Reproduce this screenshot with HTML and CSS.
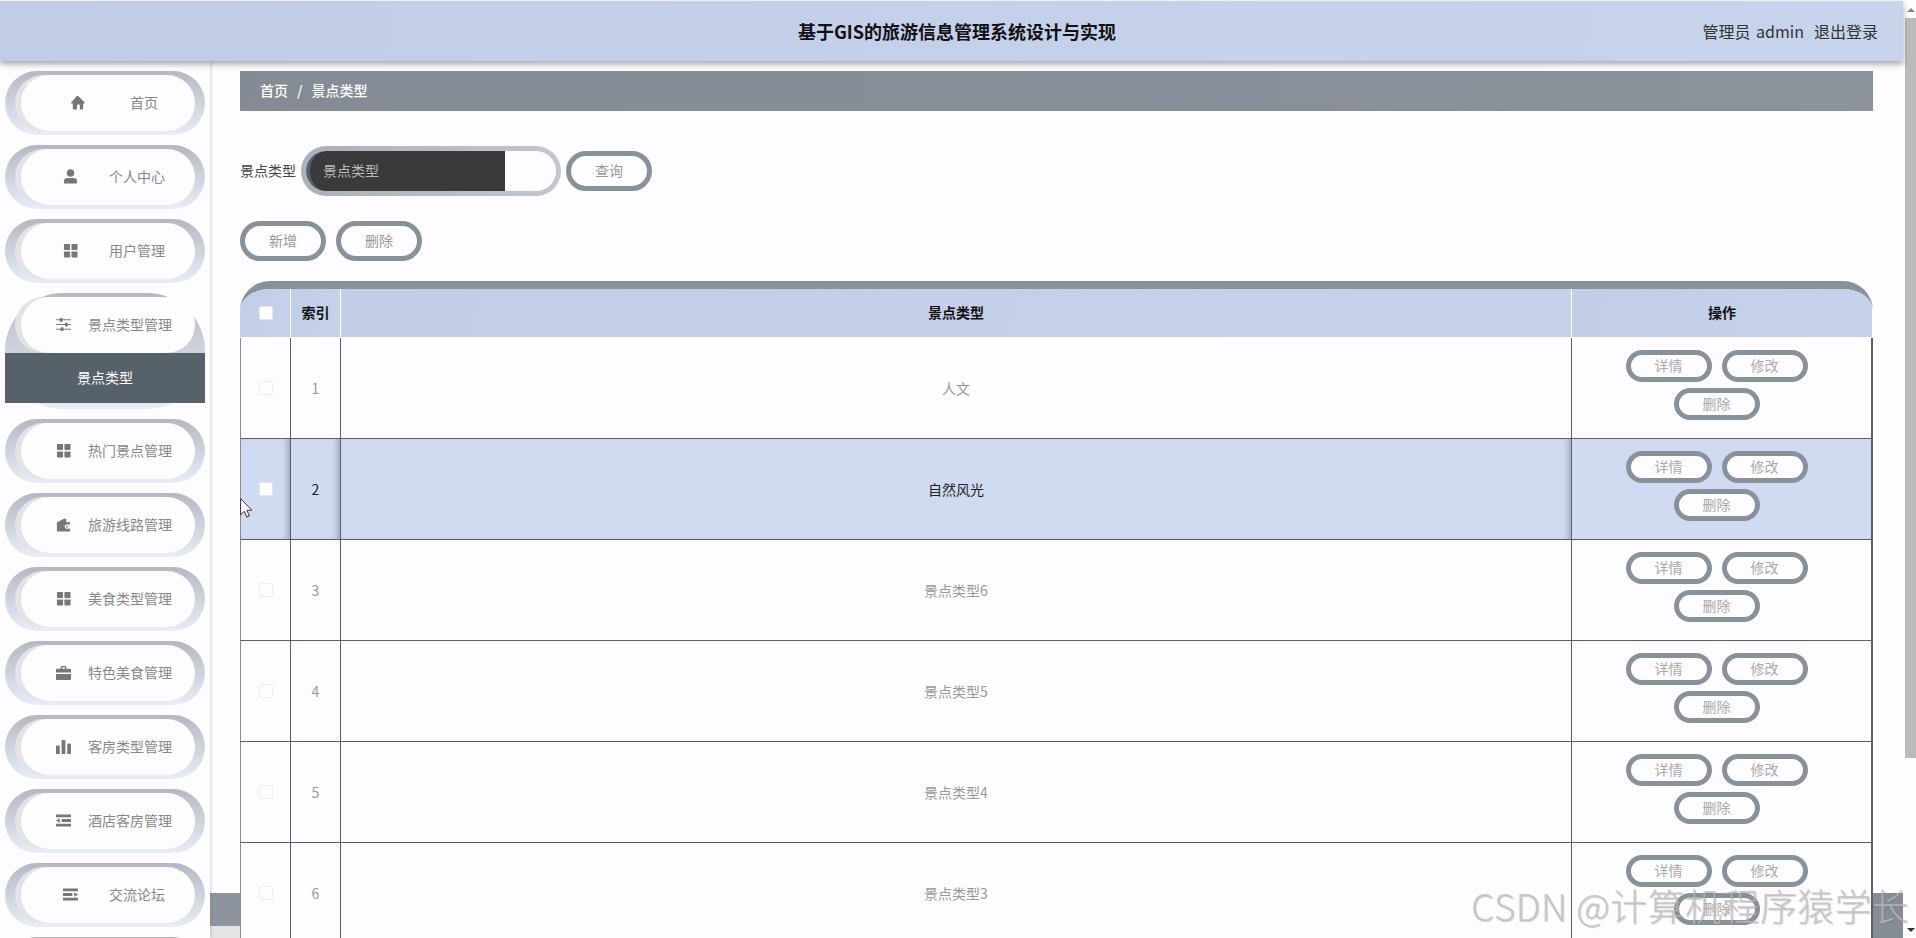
FILE: index.html
```html
<!DOCTYPE html>
<html lang="zh-CN">
<head>
    <meta charset="UTF-8">
    <meta name="viewport" content="width=device-width, initial-scale=1.0">
    <title>基于GIS的旅游信息管理系统设计与实现</title>
    <link rel="stylesheet" href="styles.css">
</head>
<body>
    <svg class="icon-defs" aria-hidden="true">
        <symbol id="i-home" viewBox="0 0 16 16"><path d="M8 1c.4 0 .7.1 1 .4l6.500 6.200c.6.6.2 1.400-.5 1.400h-1v5.500c0 .6-.4 1-1 1h-2.500v-4.500c0-.6-.4-1-1-1h-1c-.6 0-1 .4-1 1v4.500H4c-.6 0-1-.4-1-1V9H2c-.7 0-1.100-.8-.5-1.400L7 1.400c.3-.3.6-.4 1-.4z"/></symbol>
        <symbol id="i-user" viewBox="0 0 16 16"><circle cx="8" cy="4.200" r="4"/><path d="M1 15.500v-2.700C1 10.700 2.700 9.500 4.500 9.500h7c1.800 0 3.500 1.200 3.500 3.300v2.700z"/></symbol>
        <symbol id="i-grid" viewBox="0 0 16 16"><rect x="1" y="1" width="6.500" height="6.500" rx=".8"/><rect x="9" y="1" width="6.500" height="6.500" rx=".8"/><rect x="1" y="9" width="6.500" height="6.500" rx=".8"/><rect x="9" y="9" width="6.500" height="6.500" rx=".8"/></symbol>
        <symbol id="i-sliders" viewBox="0 0 16 16"><path d="M0 2.500h16v1H0zM0 7.500h16v1H0zM0 12.500h16v1H0z"/><rect x="4" y="1" width="3" height="4" rx=".6"/><rect x="9.500" y="6" width="3" height="4" rx=".6"/><rect x="5" y="11" width="3" height="4" rx=".6"/></symbol>
        <symbol id="i-wallet" viewBox="0 0 16 16"><path d="M1 5.500L9 1.500l2 .8v3.200h4V8h-3.500a2.300 2.300 0 000 4.600H15v2.900H1z"/><circle cx="11.700" cy="10.300" r="1"/></symbol>
        <symbol id="i-case" viewBox="0 0 16 16"><path d="M5 4V2c0-.6.4-1 1-1h4c.6 0 1 .4 1 1v2h4c.6 0 1 .4 1 1v3H0V5c0-.6.4-1 1-1zm1.500 0h3V2.500h-3zM0 9.500h16V15c0 .6-.4 1-1 1H1c-.6 0-1-.4-1-1z"/></symbol>
        <symbol id="i-bars" viewBox="0 0 16 16"><rect x="0" y="7" width="4" height="9"/><rect x="6" y="1" width="4" height="15" rx=".8"/><rect x="12" y="5" width="4" height="11"/></symbol>
        <symbol id="i-outdent" viewBox="0 0 16 16"><path d="M0 1.500h16v3H0zM6 6.500h10v3H6zM0 11.500h16v3H0zM0 8l4-2.300v4.600z"/></symbol>
        <symbol id="i-indent" viewBox="0 0 16 16"><path d="M0 1.500h16v3H0zM0 6.500h10v3H0zM0 11.500h16v3H0zM16 8l-4-2.300v4.600z"/></symbol>
    </svg>

    <header class="topbar">
        <span></span>
        <h1 class="topbar-title">基于GIS的旅游信息管理系统设计与实现</h1>
        <div class="topbar-user">
            <span class="user-name">管理员 admin</span>
            <a href="#">退出登录</a>
        </div>
    </header>

    <div class="layout">
        <nav class="sidebar">
            <div class="menu-item">
                <a class="menu-title gap-two" href="#"><svg class="menu-icon"><use href="#i-home"/></svg>首页</a>
            </div>
            <div class="menu-item">
                <a class="menu-title gap-four" href="#"><svg class="menu-icon"><use href="#i-user"/></svg>个人中心</a>
            </div>
            <div class="menu-item">
                <a class="menu-title gap-four" href="#"><svg class="menu-icon"><use href="#i-grid"/></svg>用户管理</a>
            </div>
            <div class="menu-item menu-open">
                <a class="menu-title" href="#"><svg class="menu-icon"><use href="#i-sliders"/></svg>景点类型管理</a>
                <a class="submenu-item" href="#">景点类型</a>
            </div>
            <div class="menu-item">
                <a class="menu-title" href="#"><svg class="menu-icon"><use href="#i-grid"/></svg>热门景点管理</a>
            </div>
            <div class="menu-item">
                <a class="menu-title" href="#"><svg class="menu-icon"><use href="#i-wallet"/></svg>旅游线路管理</a>
            </div>
            <div class="menu-item">
                <a class="menu-title" href="#"><svg class="menu-icon"><use href="#i-grid"/></svg>美食类型管理</a>
            </div>
            <div class="menu-item">
                <a class="menu-title" href="#"><svg class="menu-icon"><use href="#i-case"/></svg>特色美食管理</a>
            </div>
            <div class="menu-item">
                <a class="menu-title" href="#"><svg class="menu-icon"><use href="#i-bars"/></svg>客房类型管理</a>
            </div>
            <div class="menu-item">
                <a class="menu-title" href="#"><svg class="menu-icon"><use href="#i-outdent"/></svg>酒店客房管理</a>
            </div>
            <div class="menu-item">
                <a class="menu-title gap-four" href="#"><svg class="menu-icon"><use href="#i-indent"/></svg>交流论坛</a>
            </div>
            <div class="menu-item">
                <a class="menu-title" href="#"></a>
            </div>
        </nav>

        <main class="content">
            <div class="breadcrumb">首页<span class="breadcrumb-sep">/</span>景点类型</div>

            <form class="search-row">
                <label class="search-label" for="typeName">景点类型</label>
                <div class="search-box">
                    <div class="search-inner">
                        <input class="search-input" id="typeName" type="text" placeholder="景点类型">
                    </div>
                </div>
                <button class="pill-btn" type="button">查询</button>
            </form>

            <div class="tool-row">
                <button class="pill-btn" type="button">新增</button>
                <button class="pill-btn" type="button">删除</button>
            </div>

            <div class="table-wrap">
                <table class="data-table">
                    <colgroup>
                        <col class="col-check">
                        <col class="col-index">
                        <col class="col-name">
                        <col class="col-action">
                    </colgroup>
                    <thead>
                        <tr>
                            <th><span class="check check-light"></span></th>
                            <th>索引</th>
                            <th>景点类型</th>
                            <th>操作</th>
                        </tr>
                    </thead>
                    <tbody>
                        <tr>
                            <td><span class="check"></span></td>
                            <td>1</td>
                            <td>人文</td>
                            <td><div class="row-actions"><button class="pill-btn small" type="button">详情</button><button class="pill-btn small" type="button">修改</button><button class="pill-btn small" type="button">删除</button></div></td>
                        </tr>
                        <tr class="row-hover">
                            <td><span class="check check-light"></span></td>
                            <td>2</td>
                            <td>自然风光</td>
                            <td><div class="row-actions"><button class="pill-btn small" type="button">详情</button><button class="pill-btn small" type="button">修改</button><button class="pill-btn small" type="button">删除</button></div></td>
                        </tr>
                        <tr>
                            <td><span class="check"></span></td>
                            <td>3</td>
                            <td>景点类型6</td>
                            <td><div class="row-actions"><button class="pill-btn small" type="button">详情</button><button class="pill-btn small" type="button">修改</button><button class="pill-btn small" type="button">删除</button></div></td>
                        </tr>
                        <tr>
                            <td><span class="check"></span></td>
                            <td>4</td>
                            <td>景点类型5</td>
                            <td><div class="row-actions"><button class="pill-btn small" type="button">详情</button><button class="pill-btn small" type="button">修改</button><button class="pill-btn small" type="button">删除</button></div></td>
                        </tr>
                        <tr>
                            <td><span class="check"></span></td>
                            <td>5</td>
                            <td>景点类型4</td>
                            <td><div class="row-actions"><button class="pill-btn small" type="button">详情</button><button class="pill-btn small" type="button">修改</button><button class="pill-btn small" type="button">删除</button></div></td>
                        </tr>
                        <tr>
                            <td><span class="check"></span></td>
                            <td>6</td>
                            <td>景点类型3</td>
                            <td><div class="row-actions"><button class="pill-btn small" type="button">详情</button><button class="pill-btn small" type="button">修改</button><button class="pill-btn small" type="button">删除</button></div></td>
                        </tr>
                    </tbody>
                </table>
            </div>
        </main>
    </div>

    <div class="footer-bar"></div>

    <div class="scrollbar">
        <span class="scroll-up"></span>
        <span class="scroll-thumb"></span>
        <span class="scroll-down"></span>
    </div>

    <svg class="mouse-cursor" viewBox="0 0 12 20"><path d="M.6.6v16.200l3.700-3.500 2.500 5.800 2.600-1.100-2.500-5.700h5z" fill="#fff" stroke="#333" stroke-width="1"/></svg>

    <div class="watermark">CSDN @计算机程序猿学长</div>
</body>
</html>
```

FILE: styles.css
```css
* {
    box-sizing: border-box;
}
html, body {
    height: 100%;
}
body {
    position: relative;
    height: 938px;
    margin: 0;
    overflow: hidden;
    background-color: #fdfcfe;
    font-family: "Noto Sans CJK SC", "Open Sans", sans-serif;
    font-size: 14px;
    color: #999;
}
a {
    color: inherit;
    text-decoration: none;
}
.icon-defs {
    display: none;
}

/* top bar */
.topbar {
    position: relative;
    z-index: 3;
    display: grid;
    grid-template-columns: 1fr auto 1fr;
    align-items: center;
    width: 1903px;
    height: 60px;
    margin-top: 1px;
    padding: 0 25px 0 36px;
    background: linear-gradient(100deg, #c1cde6, #c8d3ec);
    box-shadow: 0 3px 6px rgba(60, 60, 70, 0.45);
}
.topbar-title {
    margin: 0;
    font-size: 18px;
    line-height: 60px;
    font-weight: 700;
    color: #111;
}
.topbar-user {
    display: flex;
    justify-content: flex-end;
    gap: 10px;
    font-size: 16px;
    color: #333;
}
.user-name {
    word-spacing: 2px;
}

/* layout */
.layout {
    display: flex;
    width: 1903px;
    height: 877px;
}
.sidebar {
    position: relative;
    z-index: 2;
    flex: none;
    width: 210px;
    height: 877px;
    padding: 10px 0 0 5px;
    overflow: hidden;
    background-color: #fdfcfe;
    box-shadow: 1px 0 3px rgba(120, 120, 130, 0.3);
}
.menu-item {
    width: 200px;
    margin-bottom: 10px;
    padding: 4px 0;
    border-radius: 60px;
    background: linear-gradient(180deg, #b4b8c3, #e7eef6);
}
.menu-title {
    display: flex;
    align-items: center;
    justify-content: center;
    gap: 17px;
    height: 56px;
    margin: 0 10px 0 16px;
    padding: 0 0 2px 12px;
    border-radius: 28px;
    background-color: #fdfcfe;
    box-shadow: -6px 0 0 #e3e3e7;
    color: #888;
    white-space: nowrap;
}
.gap-four {
    gap: 31px;
}
.gap-two {
    gap: 45px;
}
.menu-icon {
    flex: none;
    width: 15px;
    height: 15px;
    fill: #777;
}
.menu-open {
    padding-bottom: 6px;
}
.submenu-item {
    display: block;
    height: 50px;
    line-height: 48px;
    text-align: center;
    background-color: #56616a;
    color: #fff;
}

/* main area */
.content {
    position: relative;
    z-index: 1;
    flex: none;
    width: 1693px;
    padding: 10px 30px 0;
}
.breadcrumb {
    height: 40px;
    padding-left: 20px;
    line-height: 38px;
    background: linear-gradient(100deg, #838b95, #8a929a);
    color: #fff;
    font-weight: 500;
}
.breadcrumb-sep {
    margin: 0 9px;
}
.search-row {
    display: flex;
    align-items: center;
    height: 50px;
    margin-top: 35px;
}
.search-label {
    margin-right: 5px;
    padding-bottom: 2px;
    color: #444;
}
.search-box {
    width: 260px;
    height: 50px;
    margin-right: 5px;
    padding: 5px;
    border-radius: 25px;
    background: linear-gradient(90deg, #abb0ba, #c2c8ce);
}
.search-inner {
    height: 40px;
    border-radius: 20px;
    background-color: #fdfcfe;
}
.search-input {
    display: block;
    width: 199px;
    height: 40px;
    padding: 0 0 2px 13px;
    border: none;
    border-left: 4px solid #55616a;
    border-radius: 20px 0 0 20px;
    outline: none;
    background-color: #3a3a3a;
    font-family: inherit;
    font-size: 14px;
    color: #bbb;
}
.search-input::placeholder {
    color: #bbb;
    opacity: 1;
}
.pill-btn {
    width: 86px;
    height: 40px;
    padding: 0 0 2px;
    border: 5px solid #88929a;
    border-radius: 20px;
    background-color: #fdfcfe;
    font-family: inherit;
    font-size: 14px;
    color: #999;
    cursor: pointer;
}
.tool-row {
    display: flex;
    gap: 10px;
    margin-top: 25px;
}

/* table */
.table-wrap {
    margin-top: 20px;
    border-top: 8px solid #88929a;
    border-radius: 30px 30px 0 0;
    overflow: hidden;
}
.data-table {
    width: 1633px;
    border-collapse: separate;
    border-spacing: 0;
    table-layout: fixed;
    text-align: center;
}
.col-check {
    width: 51px;
}
.col-index {
    width: 50px;
}
.col-name {
    width: 1231px;
}
.col-action {
    width: 301px;
}
.data-table th {
    height: 49px;
    padding: 0 0 2px;
    border-right: 1px solid #fdfcfe;
    border-bottom: 1px solid #fdfcfe;
    background: linear-gradient(100deg, #c2cee7, #c6d2ea);
    font-size: 14px;
    font-weight: 700;
    color: #111;
}
.data-table td {
    padding: 12px 0;
    border-right: 1px solid #5c5c74;
    border-bottom: 1px solid #5c5c74;
    background-color: #fdfcfe;
    color: #999;
}
.data-table td:first-child {
    border-left: 1px solid #8a8a92;
}
.data-table td:last-child {
    border-right-width: 2px;
}
.row-hover td {
    background-color: #d0daf0;
    box-shadow: inset -6px 0 6px -4px rgba(70, 70, 90, 0.4);
    color: #222;
}
.row-hover td:last-child {
    box-shadow: none;
}
.check {
    display: block;
    width: 14px;
    height: 14px;
    margin-left: 18px;
    border: 1px solid #eeeef2;
    border-radius: 2px;
    background-color: #fdfcfe;
}
.check-light {
    background-color: #fff;
    border-color: #e4e8f2;
}
th .check {
    margin: 2px 0 0 19px;
}
.row-actions {
    display: flex;
    flex-wrap: wrap;
    justify-content: center;
    width: 200px;
    height: 76px;
    margin: 0 auto;
}
.pill-btn.small {
    width: 86px;
    height: 32px;
    margin: 0 10px 6px 0;
    border-radius: 16px;
    color: #aaa;
}

/* leftovers that show around the table */
.footer-bar {
    position: absolute;
    left: 210px;
    top: 893px;
    width: 1693px;
    height: 45px;
    background: linear-gradient(100deg, #8c959d, #848c96);
}
.footer-bar::before {
    content: "";
    display: block;
    width: 30px;
    height: 12px;
    margin-top: 33px;
    float: left;
    background-color: #e4e4e6;
}

/* browser scrollbar, drawn */
.scrollbar {
    position: absolute;
    top: 0;
    right: 0;
    width: 11px;
    height: 938px;
}
.scroll-thumb {
    position: absolute;
    top: 18px;
    left: 0;
    width: 11px;
    height: 740px;
    background-color: #bcbabc;
}
.scroll-up, .scroll-down {
    position: absolute;
    left: 2px;
    width: 0;
    height: 0;
    border-left: 4px solid transparent;
    border-right: 4px solid transparent;
}
.scroll-up {
    top: 8px;
    border-bottom: 4px solid #8a8a8a;
}
.scroll-down {
    top: 928px;
    border-top: 4px solid #333;
}

.mouse-cursor {
    position: absolute;
    left: 240px;
    top: 498px;
    z-index: 5;
    width: 12px;
    height: 20px;
}
.watermark {
    position: absolute;
    left: 1471px;
    top: 880px;
    z-index: 6;
    font-size: 37px;
    line-height: 50px;
    font-weight: 300;
    letter-spacing: 0.4px;
    white-space: nowrap;
    color: rgba(190, 190, 190, 0.75);
    text-shadow: 1px 1px 1px rgba(120, 120, 120, 0.35);
}
```
